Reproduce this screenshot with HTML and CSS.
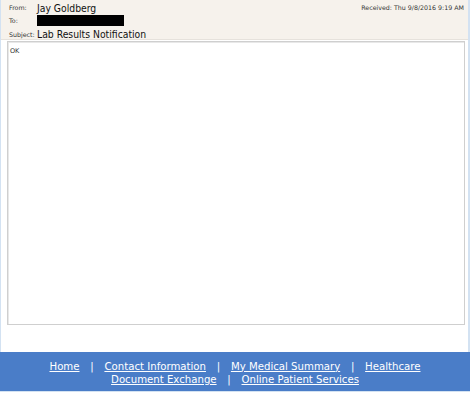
FILE: index.html
```
<!DOCTYPE html>
<html>
<head>
<meta charset="utf-8">
<link rel="stylesheet" href="styles.css">
</head>
<body>
<div class="page">
  <div class="header">
    <div class="row">
      <span class="label">From:</span>
      <span class="value">Jay Goldberg</span>
      <span class="received">Received: Thu 9/8/2016 9:19 AM</span>
    </div>
    <div class="row">
      <span class="label">To:</span>
      <span class="redacted"></span>
    </div>
    <div class="row row-last">
      <span class="label">Subject:</span>
      <span class="value">Lab Results Notification</span>
    </div>
  </div>
  <div class="body-wrap">
    <div class="message">OK</div>
  </div>
</div>
<div class="footer">
  <div class="links">
    <a href="#">Home</a> <span class="sep">|</span> <a href="#">Contact Information</a> <span class="sep">|</span> <a href="#">My Medical Summary</a> <span class="sep">|</span> <a href="#">Healthcare Document Exchange</a> <span class="sep">|</span> <a href="#">Online Patient Services</a>
  </div>
</div>
</body>
</html>
```
FILE: styles.css
```
html, body {
  margin: 0;
  padding: 0;
  background: #ffffff;
  font-family: "DejaVu Sans", Verdana, sans-serif;
}
.page {
  width: 467px;
  height: 352px;
  border-left: 1px solid #d3e2f2;
  border-right: 2px solid #d3e2f2;
  box-sizing: content-box;
}
.header {
  background: #f6f2ec;
  height: 40px;
  box-sizing: border-box;
  padding: 1px 4px 0 8px;
  border-bottom: 1px solid #e6e2dc;
}
.row {
  display: flex;
  align-items: center;
  height: 13px;
}
.row-last {
  height: 14px;
}
.label {
  width: 28px;
  font-size: 6.3px;
  color: #333;
}
.value {
  font-family: "DejaVu Sans Condensed", "DejaVu Sans", sans-serif;
  font-stretch: condensed;
  font-size: 10.3px;
  color: #111;
}
.received {
  margin-left: auto;
  font-size: 6.3px;
  color: #333;
}
.redacted {
  display: inline-block;
  width: 87px;
  height: 11px;
  background: #000;
}
.body-wrap {
  padding: 1px 3px 0 6px;
}
.message {
  height: 284px;
  box-sizing: border-box;
  border: 1px solid #cfcfcf;
  box-shadow: inset 1px 1px 0 #e8e8e8;
  padding: 5px 2px;
  font-size: 6.5px;
  color: #333;
}
.footer {
  width: 470px;
  height: 40px;
  box-sizing: border-box;
  padding-top: 2px;
  background: #4a7dc8;
  display: flex;
  align-items: center;
  justify-content: center;
  border-bottom: 1px solid #d3e2f2;
}
.links {
  width: 400px;
  text-align: center;
  font-family: "DejaVu Sans Condensed", "DejaVu Sans", sans-serif;
  font-stretch: condensed;
  font-size: 11.3px;
  line-height: 13px;
  color: #ffffff;
}
.links a {
  color: #ffffff;
  text-decoration: underline;
}
.sep {
  margin: 0 7.5px;
}
```
